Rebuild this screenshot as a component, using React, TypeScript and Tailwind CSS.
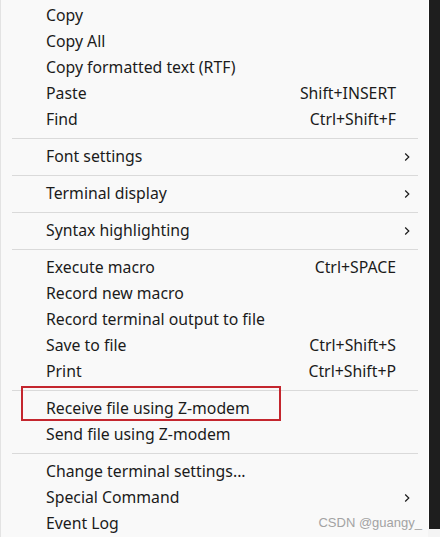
import React from "react";

type Item =
  | { type: "item"; label: string; shortcut?: string; sub?: boolean; mark?: boolean }
  | { type: "sep" };

const items: Item[] = [
  { type: "item", label: "Copy" },
  { type: "item", label: "Copy All" },
  { type: "item", label: "Copy formatted text (RTF)" },
  { type: "item", label: "Paste", shortcut: "Shift+INSERT" },
  { type: "item", label: "Find", shortcut: "Ctrl+Shift+F" },
  { type: "sep" },
  { type: "item", label: "Font settings", sub: true },
  { type: "sep" },
  { type: "item", label: "Terminal display", sub: true },
  { type: "sep" },
  { type: "item", label: "Syntax highlighting", sub: true },
  { type: "sep" },
  { type: "item", label: "Execute macro", shortcut: "Ctrl+SPACE" },
  { type: "item", label: "Record new macro" },
  { type: "item", label: "Record terminal output to file" },
  { type: "item", label: "Save to file", shortcut: "Ctrl+Shift+S" },
  { type: "item", label: "Print", shortcut: "Ctrl+Shift+P" },
  { type: "sep" },
  { type: "item", label: "Receive file using Z-modem", mark: true },
  { type: "item", label: "Send file using Z-modem" },
  { type: "sep" },
  { type: "item", label: "Change terminal settings..." },
  { type: "item", label: "Special Command", sub: true },
  { type: "item", label: "Event Log" },
];

function Chevron() {
  return (
    <svg width="6" height="10" viewBox="0 0 6 10" fill="none">
      <path d="M1.2 1.5 L4.8 5 L1.2 8.5" stroke="#1b1b1b" strokeWidth="1.2" />
    </svg>
  );
}

export default function App() {
  return (
    <div
      className="relative flex w-[440px] h-[537px] overflow-hidden bg-[#1e1e1e]"
      style={{ fontFamily: '"Noto Sans", "Open Sans", sans-serif' }}
    >
      <div className="w-[428px] shrink-0 h-full bg-[#f9f9f9] border-l border-l-[#e3e3e3] pt-[3px] text-[15.8px] text-[#1b1b1b]">
        {items.map((it, i) =>
          it.type === "sep" ? (
            <div key={i} className="h-[11px] flex items-center pl-[11px] pr-[10px]">
              <div className="h-px w-full bg-[#dadada]" />
            </div>
          ) : (
            <div key={i} className="relative h-[26px] flex items-center pl-[45px] pr-[10px]">
              <span className="flex-1 whitespace-nowrap leading-none">{it.label}</span>
              {it.shortcut && (
                <span className="whitespace-nowrap leading-none">{it.shortcut}</span>
              )}
              <span className="w-[22px] flex justify-center items-center">
                {it.sub && <Chevron />}
              </span>
              {it.mark && (
                <div className="absolute left-[20px] top-[-10px] w-[260px] h-[35px] border-2 border-[#c4262e]" />
              )}
            </div>
          )
        )}
      </div>
      <div className="flex-1 min-w-[12px] h-full flex flex-col">
        <div className="h-[529px] bg-[#1e1e1e] border-l border-l-[#ffffff]" />
        <div className="flex-1 bg-[#f4f4f4]" />
      </div>
      <span
        className="absolute right-[16px] bottom-[8px] text-[13px] leading-none text-[#a3a3a3] bg-[#f9f9f9]/80 px-[2px]"
        style={{ fontFamily: '"Liberation Sans", Arial, sans-serif' }}
      >
        CSDN @guangy_
      </span>
    </div>
  );
}
